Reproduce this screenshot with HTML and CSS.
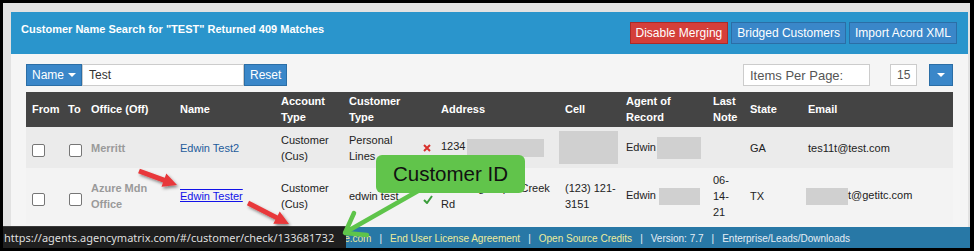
FILE: index.html
```html
<!DOCTYPE html>
<html lang="en">
<head>
    <meta charset="UTF-8">
    <title>Customer Search</title>
    <link rel="stylesheet" href="styles.css">
</head>
<body>
<div class="screen">
    <div class="frame">
        <section class="panel">
            <header class="panel-head">
                <h2 class="panel-title">Customer Name Search for "TEST" Returned 409 Matches</h2>
                <div class="head-actions">
                    <button class="btn btn-red">Disable Merging</button>
                    <button class="btn btn-blue">Bridged Customers</button>
                    <button class="btn btn-blue">Import Acord XML</button>
                </div>
            </header>

            <div class="panel-body">
                <div class="toolbar">
                    <div class="search">
                        <button class="btn btn-blue btn-name">Name <span class="caret"></span></button>
                        <div class="search-input">Test</div>
                        <button class="btn btn-blue">Reset</button>
                    </div>
                    <div class="paging">
                        <div class="per-page">Items Per Page:</div>
                        <div class="per-count">15</div>
                        <button class="btn btn-blue btn-drop"><span class="caret"></span></button>
                    </div>
                </div>

                <table class="results">
                    <colgroup>
                        <col style="width:36px"><col style="width:23px"><col style="width:89px">
                        <col style="width:101px"><col style="width:68px"><col style="width:74px">
                        <col style="width:18px"><col style="width:124px"><col style="width:61px">
                        <col style="width:87px"><col style="width:37px"><col style="width:58px">
                        <col style="width:151px">
                    </colgroup>
                    <thead>
                        <tr>
                            <th>From</th>
                            <th>To</th>
                            <th>Office (Off)</th>
                            <th>Name</th>
                            <th>Account Type</th>
                            <th>Customer Type</th>
                            <th class="icon-cell"></th>
                            <th>Address</th>
                            <th>Cell</th>
                            <th>Agent of Record</th>
                            <th>Last Note</th>
                            <th>State</th>
                            <th>Email</th>
                        </tr>
                    </thead>
                    <tbody>
                        <tr class="row-odd">
                            <td><span class="check"></span></td>
                            <td class="to-cell"><span class="check"></span></td>
                            <td class="office">Merritt</td>
                            <td><a class="cust-link">Edwin Test2</a></td>
                            <td>Customer (Cus)</td>
                            <td>Personal Lines</td>
                            <td class="icon-cell">
                                <svg width="8" height="8" viewBox="0 0 8 8"><path d="M1 1 L7 7 M7 1 L1 7" stroke="#d8312c" stroke-width="2"/></svg>
                            </td>
                            <td>1234<span class="redact redact-addr"></span></td>
                            <td><span class="redact redact-cell"></span></td>
                            <td>Edwin<span class="redact redact-agent"></span></td>
                            <td></td>
                            <td>GA</td>
                            <td>tes11t@test.com</td>
                        </tr>
                        <tr class="row-even">
                            <td><span class="check"></span></td>
                            <td class="to-cell"><span class="check"></span></td>
                            <td class="office">Azure Mdn Office</td>
                            <td><a class="cust-link is-focused">Edwin Tester</a></td>
                            <td>Customer (Cus)</td>
                            <td>edwin test</td>
                            <td class="icon-cell">
                                <svg width="10" height="9" viewBox="0 0 10 9"><path d="M1 5 L4 8 L9 1" fill="none" stroke="#3b9d3b" stroke-width="2"/></svg>
                            </td>
                            <td>1234 Big Maple Creek Rd</td>
                            <td>(123) 121-3151</td>
                            <td>Edwin <span class="redact redact-agent2"></span></td>
                            <td>06-14-21</td>
                            <td>TX</td>
                            <td><span class="redact redact-mail"></span>t@getitc.com</td>
                        </tr>
                    </tbody>
                </table>
            </div>
        </section>

        <footer class="footer">
            <a class="foot-link">support@agencymatrixsoftware.com</a>
            <span class="sep">|</span>
            <a class="foot-link">End User License Agreement</a>
            <span class="sep">|</span>
            <a class="foot-link">Open Source Credits</a>
            <span class="sep">|</span>
            <span class="foot-text">Version: 7.7</span>
            <span class="sep">|</span>
            <span class="foot-text">Enterprise/Leads/Downloads</span>
        </footer>
    </div>

    <div class="status-bar">https://agents.agencymatrix.com/#/customer/check/133681732</div>

    <div class="callout">Customer ID</div>

    <svg class="annotations" width="974" height="251" viewBox="0 0 974 251">
        <defs>
            <filter id="shadow" x="-30%" y="-30%" width="160%" height="160%">
                <feDropShadow dx="1.5" dy="2" stdDeviation="1.6" flood-color="#000" flood-opacity="0.45"/>
            </filter>
        </defs>
        <!-- green pointer from the callout -->
        <line x1="418" y1="191" x2="346" y2="232" stroke="#5ec44a" stroke-width="4.5" stroke-linecap="round"/>
        <polyline points="354,213 345,233 367,235" fill="none" stroke="#5ec44a" stroke-width="4.5" stroke-linecap="round" stroke-linejoin="round"/>
        <!-- red arrows -->
        <g fill="#e8383a" filter="url(#shadow)">
            <polygon points="139.9,168.7 164.8,177.8 166.3,173.6 177,185 161.5,186.8 163,182.5 138.1,173.3"/>
            <polygon points="249.1,200.8 277.7,215.4 279.7,211.4 289,224 273.3,223.8 275.4,219.8 246.9,205.2"/>
        </g>
    </svg>
</div>
</body>
</html>
```

FILE: styles.css
```css
:root {
    --head-blue: #2a95cc;
    --btn-blue: #3a87c9;
    --btn-blue-border: #2b6ea6;
    --btn-red: #d43f3a;
    --btn-red-border: #ad2a27;
    --foot-blue: #2878a6;
    --font-family: "Liberation Sans", Arial, sans-serif;
}

* {
    box-sizing: border-box;
}

body {
    margin: 0;
    background: #000;
    font-family: var(--font-family);
}

.screen {
    position: relative;
    width: 974px;
    height: 251px;
}

.frame {
    width: 974px;
    height: 251px;
    border: 3px solid #000;
    border-right-width: 4px;
    background: #e2e2e2;
    display: flex;
    flex-direction: column;
    overflow: hidden;
}

.panel {
    flex: 1;
    min-height: 0;
    margin: 9px 2px 0 8px;
    display: flex;
    flex-direction: column;
    overflow: hidden;
}

.panel-head {
    flex: none;
    height: 42px;
    background: var(--head-blue);
    display: flex;
    align-items: center;
    justify-content: space-between;
    padding: 0 11px 0 10px;
}

.panel-title {
    margin: 0;
    padding-bottom: 8px;
    font-size: 11px;
    font-weight: bold;
    color: #fff;
}

.head-actions {
    display: flex;
    gap: 3px;
}

.btn {
    height: 22px;
    padding: 0 5px;
    font-family: var(--font-family);
    font-size: 12px;
    color: #fff;
    border: 1px solid;
    border-radius: 0;
    cursor: pointer;
    display: flex;
    align-items: center;
}

.btn-blue {
    background: var(--btn-blue);
    border-color: var(--btn-blue-border);
}

.btn-red {
    background: var(--btn-red);
    border-color: var(--btn-red-border);
}

.panel-body {
    flex: 1;
    min-height: 0;
    background: #f5f5f5;
    padding: 10px 15px 0;
    overflow: hidden;
}

.toolbar {
    height: 22px;
    margin-bottom: 6px;
    display: flex;
    justify-content: space-between;
}

.search,
.paging {
    display: flex;
}

.btn-name {
    gap: 4px;
}

.caret {
    width: 0;
    height: 0;
    border-top: 4px solid #fff;
    border-left: 4px solid transparent;
    border-right: 4px solid transparent;
}

.search-input {
    width: 162px;
    height: 22px;
    padding: 0 6px;
    background: #fff;
    border: 1px solid #ccc;
    font-size: 12px;
    color: #333;
    display: flex;
    align-items: center;
}

.per-page,
.per-count {
    height: 22px;
    background: #fff;
    border: 1px solid #ccc;
    color: #555;
    display: flex;
    align-items: center;
}

.per-page {
    width: 127px;
    padding-left: 6px;
    font-size: 13px;
}

.per-count {
    width: 27px;
    margin-left: 20px;
    padding-left: 6px;
    font-size: 12px;
}

.btn-drop {
    width: 24px;
    margin-left: 12px;
    justify-content: center;
}

.results {
    width: 927px;
    table-layout: fixed;
    border-collapse: collapse;
    font-size: 11px;
    line-height: 16px;
    color: #222;
}

.results thead tr {
    height: 35px;
}

.results th {
    background: #444;
    color: #fff;
    font-weight: bold;
    text-align: left;
    vertical-align: middle;
    padding: 1px 4px 1px 6px;
    line-height: 15.5px;
}

.results td {
    padding: 4px 4px 4px 6px;
    vertical-align: middle;
}

.row-odd {
    background: #ebebeb;
}

.row-even {
    background: #f3f3f3;
}

.results .to-cell {
    padding-left: 7px;
}

.results .icon-cell {
    padding: 0 0 0 6px;
}

.icon-cell svg {
    display: block;
}

.row-even .icon-cell svg {
    margin-top: 6px;
}

.check {
    display: block;
    width: 13px;
    height: 13px;
    margin-top: 6px;
    background: #fff;
    border: 1px solid #767676;
    border-radius: 2px;
}

.office {
    font-weight: bold;
    color: #9a9a9a;
}

.cust-link {
    color: #1f5c9c;
    cursor: pointer;
}

.cust-link.is-focused {
    color: #1212e8;
    text-decoration: underline overline;
}

.redact {
    display: inline-block;
    vertical-align: middle;
    background: #d0d0d0;
}

.redact-addr {
    width: 77px;
    height: 18px;
    margin-left: 2px;
}

.redact-cell {
    display: block;
    width: 59px;
    height: 33px;
    margin-left: -6px;
}

.redact-agent {
    width: 44px;
    height: 22px;
    margin-left: 1px;
}

.redact-agent2 {
    width: 41px;
    height: 17px;
}

.redact-mail {
    width: 42px;
    height: 17px;
    margin-left: -2px;
}

.footer {
    flex: none;
    height: 21px;
    background: var(--foot-blue);
    display: flex;
    align-items: center;
    padding: 1px 0 0 206px;
    font-size: 10px;
    color: #e6eef4;
    white-space: nowrap;
}

.foot-link {
    color: #ecec9c;
}

.sep {
    margin: 0 8px;
}

.status-bar {
    position: absolute;
    left: 3px;
    top: 226px;
    width: 343px;
    height: 22px;
    padding-left: 1px;
    background: #1f1f1f;
    border-top: 1px solid #3a3a3a;
    color: #dedede;
    font-family: "Noto Sans", "Open Sans", sans-serif;
    font-size: 11px;
    display: flex;
    align-items: center;
    white-space: nowrap;
    overflow: hidden;
}

.callout {
    position: absolute;
    left: 376px;
    top: 155px;
    width: 149px;
    height: 38px;
    border-radius: 6px;
    background: #61c44b;
    color: #111;
    font-size: 20.5px;
    display: flex;
    align-items: center;
    justify-content: center;
}

.annotations {
    position: absolute;
    left: 0;
    top: 0;
    pointer-events: none;
}
```
